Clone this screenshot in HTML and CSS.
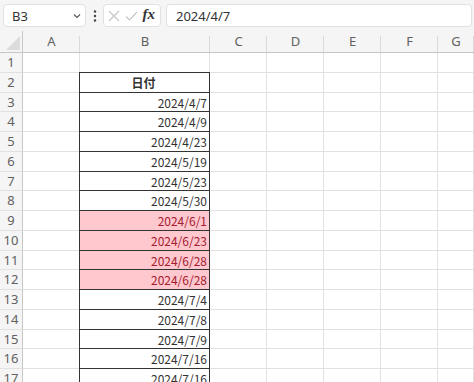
FILE: index.html
```html
<!DOCTYPE html>
<html lang="ja">
<head>
  <meta charset="UTF-8">
  <title>Sheet1</title>
  <link rel="stylesheet" href="styles.css">
</head>
<body>
  <div class="toolbar">
    <div class="namebox">
      <span>B3</span>
      <svg width="8" height="6" viewBox="0 0 8 6"><path d="M1 1.5 L4 4.5 L7 1.5" fill="none" stroke="#555" stroke-width="1.1"/></svg>
    </div>
    <div class="dots">
      <svg width="4" height="12" viewBox="0 0 4 12"><circle cx="2" cy="1.5" r="1.2" fill="#444"/><circle cx="2" cy="6" r="1.2" fill="#444"/><circle cx="2" cy="10.5" r="1.2" fill="#444"/></svg>
    </div>
    <div class="fxbox">
      <svg width="12" height="12" viewBox="0 0 12 12"><path d="M1 1 L11 11 M11 1 L1 11" stroke="#c4c4c4" stroke-width="1.1"/></svg>
      <svg width="13" height="10" viewBox="0 0 13 10"><path d="M1 5.5 L4.5 9 L12 1" fill="none" stroke="#c4c4c4" stroke-width="1.1"/></svg>
      <span class="fx">fx</span>
    </div>
    <div class="formula">2024/4/7</div>
  </div>

  <div class="sheet" id="sheet"></div>

  <script>
    const cols = ['A', 'B', 'C', 'D', 'E', 'F', 'G'];
    const dates = [
      ['2024/4/7'], ['2024/4/9'], ['2024/4/23'], ['2024/5/19'], ['2024/5/23'],
      ['2024/5/30'], ['2024/6/1', true], ['2024/6/23', true], ['2024/6/28', true],
      ['2024/6/28', true], ['2024/7/4'], ['2024/7/8'], ['2024/7/9'],
      ['2024/7/16'], ['2024/7/16']
    ];
    const sheet = document.getElementById('sheet');

    function cell(cls, text) {
      const d = document.createElement('div');
      d.className = cls;
      if (text) d.textContent = text;
      sheet.appendChild(d);
    }

    cell('corner', '');
    sheet.lastChild.innerHTML = '<svg width="14" height="14" viewBox="0 0 14 14"><polygon points="14,0 14,14 0,14" fill="#dcdcdc"/></svg>';
    cols.forEach(c => cell('colhead', c));

    for (let r = 1; r <= 17; r++) {
      cell('rowhead', String(r));
      cols.forEach(c => {
        if (c === 'B' && r === 2) {
          cell('cell t title', '日付');
        } else if (c === 'B' && r > 2) {
          const d = dates[r - 3];
          cell('cell t' + (d[1] ? ' bad' : ''), d[0]);
        } else {
          cell('cell', '');
        }
      });
    }
  </script>
</body>
</html>
```

FILE: styles.css
```css
* {
  margin: 0;
  padding: 0;
  box-sizing: border-box;
}

body {
  background: #f5f5f5;
  font-family: 'Noto Sans', sans-serif;
  overflow: hidden;
}

.toolbar {
  display: flex;
  align-items: center;
  height: 31px;
  padding: 0 2px 0 3px;
}

.namebox,
.fxbox,
.formula {
  background: #fff;
  border: 1px solid #e1e1e1;
  border-radius: 4px;
  height: 23px;
  display: flex;
  align-items: center;
}

.namebox {
  width: 83px;
  justify-content: space-between;
  padding: 0 4px 0 8px;
  font-size: 13px;
  color: #333;
}

.dots {
  width: 17px;
  display: flex;
  justify-content: center;
  padding-top: 1px;
}

.fxbox {
  width: 58px;
  padding: 0 4px 0 4px;
  justify-content: space-between;
}

.fx {
  font-family: 'Liberation Serif', serif;
  font-style: italic;
  font-weight: bold;
  font-size: 15px;
  color: #333;
  padding: 0 1px 2px 0;
}

.formula {
  flex: 1;
  margin-left: 5px;
  padding-left: 9px;
  font-size: 13px;
  color: #333;
}

.sheet {
  display: grid;
  grid-template-columns: 23px 57px 130px 57px 57px 57px 57px 1fr;
  grid-template-rows: 22px;
  grid-auto-rows: 19.77px;
  background: #fff;
}

.corner,
.colhead {
  background: #f5f5f5;
  border-bottom: 1px solid #c6c6c6;
  position: relative;
}

.corner {
  display: flex;
  align-items: flex-end;
  justify-content: flex-end;
  padding: 0 2px 2px 0;
  border-right: 1px solid #c6c6c6;
}

.colhead {
  text-align: center;
  font-size: 13px;
  line-height: 21px;
  color: #616161;
}

.colhead::after {
  content: '';
  position: absolute;
  right: 0;
  top: 5px;
  bottom: 0;
  width: 1px;
  background: #dadada;
}

.rowhead {
  background: #f5f5f5;
  border-right: 1px solid #c6c6c6;
  border-bottom: 1px solid #e1e1e1;
  text-align: center;
  font-size: 13px;
  line-height: 19px;
  color: #616161;
}

.cell {
  border-right: 1px solid #e1e1e1;
  border-bottom: 1px solid #e1e1e1;
  font-family: 'Noto Sans CJK JP', sans-serif;
  font-size: 12px;
  color: #333;
  text-align: right;
  padding-right: 2px;
  line-height: 18px;
  white-space: nowrap;
}

.cell.t {
  border: 1px solid #333;
  margin: -1px 0 0 -1px;
  line-height: 19px;
}

.cell.title {
  text-align: center;
  font-weight: bold;
  font-size: 12px;
}

.cell.bad {
  background: #ffc7ce;
  color: #a4202e;
}
```
